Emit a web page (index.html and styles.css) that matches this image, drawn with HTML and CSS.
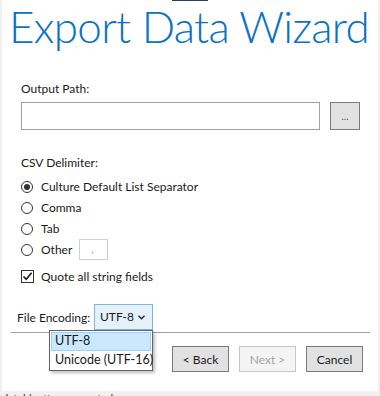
FILE: index.html
```
<!DOCTYPE html>
<html lang="en">
<head>
    <meta charset="UTF-8">
    <title>Export Data Wizard</title>
    <link rel="stylesheet" href="styles.css">
</head>
<body>
    <div class="window">
        <div class="top-mark"></div>
        <h1 class="title">Export Data Wizard</h1>

        <div class="label">Output Path:</div>
        <div class="path-row">
            <div class="textbox path-box"></div>
            <button class="btn browse">...</button>
        </div>

        <div class="label csv-label">CSV Delimiter:</div>
        <div class="option checked"><span class="radio"></span>Culture Default List Separator</div>
        <div class="option"><span class="radio"></span>Comma</div>
        <div class="option"><span class="radio"></span>Tab</div>
        <div class="option other"><span class="radio"></span>Other <div class="textbox other-box">,</div></div>
        <div class="option check-row">
            <span class="checkbox">
                <svg width="11" height="11" viewBox="0 0 11 11"><path d="M1.5 5.5 L4.2 8.3 L9.6 1.8" fill="none" stroke="#1a1a1a" stroke-width="1.6"/></svg>
            </span>Quote all string fields
        </div>

        <div class="encoding-row">
            <span class="enc-label">File Encoding:</span>
            <div class="combo">
                UTF-8
                <svg class="chevron" width="7" height="5" viewBox="0 0 7 5"><path d="M0.5 0.8 L3.5 3.8 L6.5 0.8" fill="none" stroke="#222" stroke-width="1.3"/></svg>
                <!-- open dropdown list -->
                <div class="dropdown">
                    <div class="item selected">UTF-8</div>
                    <div class="item">Unicode (UTF-16)</div>
                </div>
            </div>
        </div>
        <div class="separator"></div>

        <div class="buttons">
            <button class="btn">&lt; Back</button>
            <button class="btn" disabled>Next &gt;</button>
            <button class="btn">Cancel</button>
        </div>
    </div>
    <div class="below">dataldpattern exported</div>
</body>
</html>
```
FILE: styles.css
```
/* Page */
body {
    margin: 0;
    height: 396px;
    overflow: hidden;
    background: #f0f0f0;
    font-family: "Segoe UI", "Lato", sans-serif;
    font-size: 12px;
    color: #1a1a1a;
}

.window {
    width: 376px;
    height: 391px;
    margin-left: 2px;
    background: #fff;
    box-sizing: border-box;
    padding-left: 19px;
}

.top-mark {
    width: 36px;
    height: 1px;
    margin-left: 151px;
    background: #2d3d6b;
}

/* Title */
.title {
    margin: -2px 0 0 -12px;
    padding-bottom: 1px;
    font-weight: 300;
    font-size: 44px;
    line-height: 55px;
    letter-spacing: -0.7px;
    color: #0a72c7;
    white-space: nowrap;
}

.label {
    line-height: 16px;
    margin-top: 26px;
}

.csv-label {
    margin-top: 25px;
}

/* Output path */
.path-row {
    display: flex;
    gap: 10px;
    margin-top: 5px;
}

.textbox {
    border: 1px solid #a0a0a0;
    background: #fff;
    box-sizing: border-box;
}

.path-box {
    width: 299px;
    height: 28px;
}

.btn {
    font-family: inherit;
    font-size: 12px;
    color: #1a1a1a;
    background: #e1e1e1;
    border: 1px solid #7a7a7a;
    width: 57px;
    height: 26px;
    padding: 0;
}

.btn:disabled {
    background: #f4f4f4;
    border-color: #c6c6c6;
    color: #a3a3a3;
}

.browse {
    width: 30px;
    height: 28px;
    font-size: 10px;
    color: #555;
    line-height: 20px;
}

/* Radios */
.option {
    display: flex;
    align-items: center;
    height: 21px;
    white-space: nowrap;
}

.csv-label + .option {
    margin-top: 5px;
}

.radio {
    width: 12px;
    height: 12px;
    border: 1px solid #333;
    border-radius: 50%;
    box-sizing: border-box;
    margin-right: 8px;
    position: relative;
}

.checked .radio::after {
    content: "";
    position: absolute;
    left: 2px;
    top: 2px;
    width: 6px;
    height: 6px;
    border-radius: 50%;
    background: #333;
}

.other-box {
    width: 29px;
    height: 21px;
    margin-left: 7px;
    border-color: #cfcfcf;
    color: #999;
    font-size: 11px;
    line-height: 17px;
    padding-left: 11px;
}

.check-row {
    margin-top: 6px;
}

.checkbox {
    width: 13px;
    height: 13px;
    border: 1px solid #333;
    box-sizing: border-box;
    margin-right: 7px;
    display: flex;
    align-items: center;
    justify-content: center;
}

/* Encoding */
.encoding-row {
    display: flex;
    align-items: center;
    margin: 17px 0 0 -4px;
    height: 26px;
}

.enc-label {
    width: 77px;
}

.combo {
    position: relative;
    width: 59px;
    height: 26px;
    box-sizing: border-box;
    border: 1px solid #7eb4ea;
    background: #e5f1fb;
    padding-left: 5px;
    line-height: 23px;
    font-size: 12px;
}

.chevron {
    position: absolute;
    right: 7px;
    top: 10px;
}

.dropdown {
    position: absolute;
    left: -46px;
    top: 25px;
    width: 104px;
    height: 41px;
    box-sizing: border-box;
    border: 1px solid #646464;
    background: #fff;
    padding: 1px;
    box-shadow: 2px 2px 3px rgba(0, 0, 0, 0.25);
    z-index: 2;
}

.item {
    height: 19px;
    line-height: 18px;
    padding-left: 4px;
    box-sizing: border-box;
    white-space: nowrap;
    font-size: 12.5px;
}

.item.selected {
    background: #cce8ff;
    border: 1px solid #99d1ff;
    padding-left: 3px;
    line-height: 16px;
}

.separator {
    height: 1px;
    background: #a0a0a0;
    margin: 2px 0 0 -10px;
    width: 359px;
}

.buttons {
    display: flex;
    gap: 10px;
    margin: 13px 0 0 151px;
}

.below {
    margin-top: 2px;
    padding-left: 2px;
    line-height: 12px;
    font-size: 11px;
    color: #333;
}
```
